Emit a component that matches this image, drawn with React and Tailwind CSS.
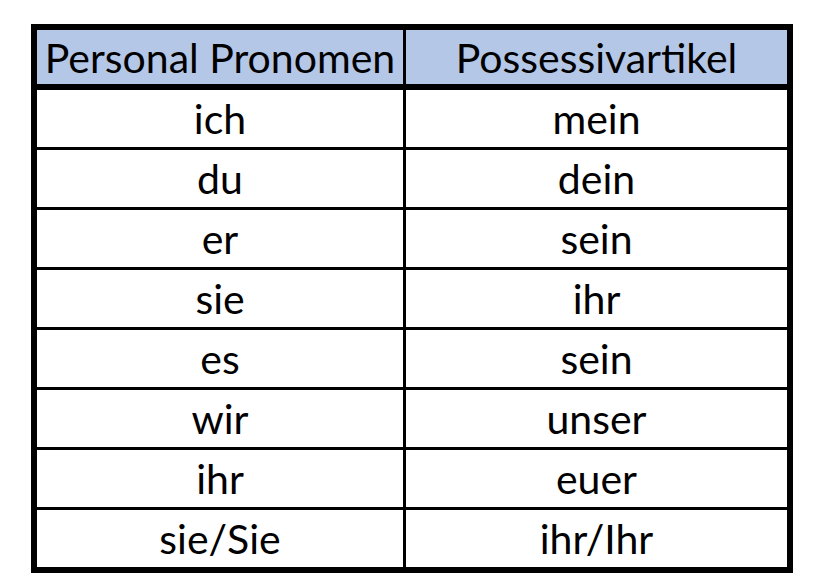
import React from "react";

const rows = [
  ["ich", "mein"],
  ["du", "dein"],
  ["er", "sein"],
  ["sie", "ihr"],
  ["es", "sein"],
  ["wir", "unser"],
  ["ihr", "euer"],
  ["sie/Sie", "ihr/Ihr"],
];

export default function App() {
  return (
    <div
      className="w-[816px] h-[582px] bg-white text-black pt-[24px] pl-[31px]"
      style={{ fontFamily: "Lato, 'Open Sans', sans-serif" }}
    >
      <div className="w-[762px] border-[6px] border-black text-[41px] leading-none">
        {/* header */}
        <div className="flex h-[60px] border-b-[6px] border-black bg-[#b4c7e7]">
          <div className="w-[369px] flex items-center justify-center border-r-[3px] border-black">
            Personal Pronomen
          </div>
          <div className="flex-1 flex items-center justify-center">
            Possessivartikel
          </div>
        </div>

        {/* rows */}
        {rows.map((r, i) => (
          <div
            key={i}
            className={`flex ${i === 0 ? "h-[57px]" : "h-[60px] border-t-[3px] border-black"}`}
          >
            <div className="w-[369px] flex items-center justify-center border-r-[3px] border-black">
              {r[0]}
            </div>
            <div className="flex-1 flex items-center justify-center">{r[1]}</div>
          </div>
        ))}
      </div>
    </div>
  );
}
